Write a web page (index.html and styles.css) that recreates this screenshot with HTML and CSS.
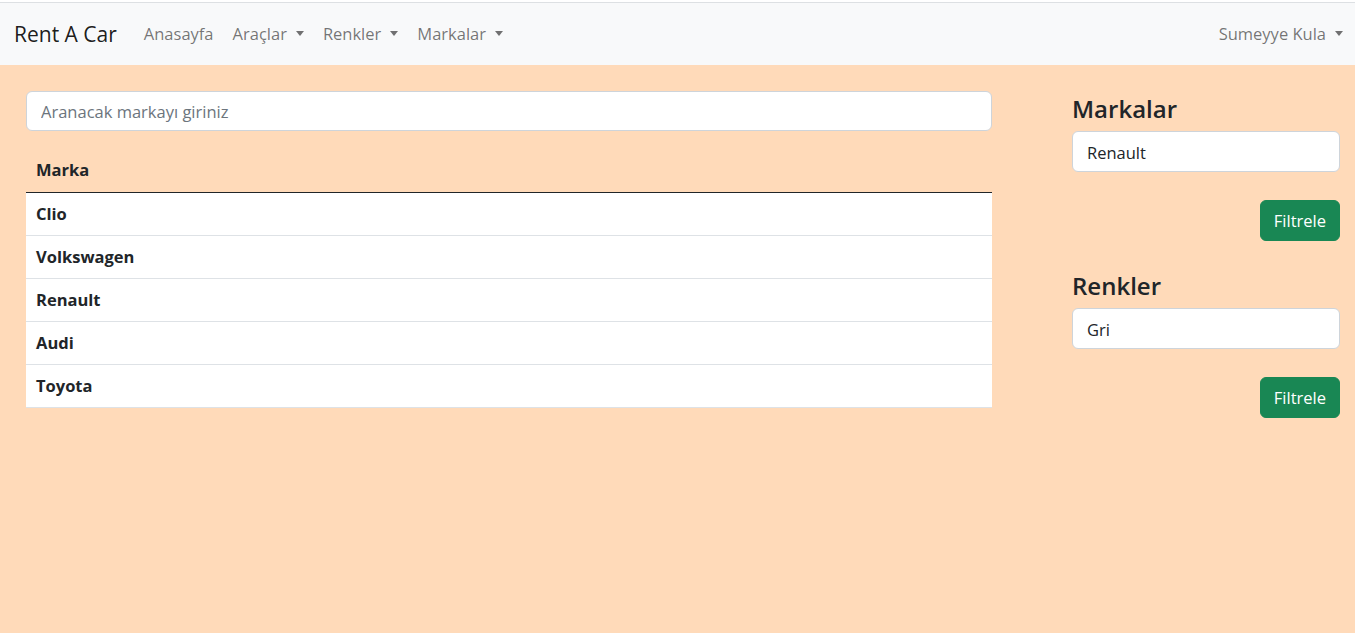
FILE: index.html
```html
<!DOCTYPE html>
<html lang="tr">
<head>
<meta charset="UTF-8">
<title>Rent A Car</title>
<link rel="stylesheet" href="styles.css">
</head>
<body>
<header class="site-header">
  <nav class="navbar">
    <a class="brand" href="#">Rent A Car</a>
    <ul class="nav-menu">
      <li><a class="nav-link" href="#">Anasayfa</a></li>
      <li><a class="nav-link dropdown" href="#">Araçlar</a></li>
      <li><a class="nav-link dropdown" href="#">Renkler</a></li>
      <li><a class="nav-link dropdown" href="#">Markalar</a></li>
    </ul>
    <a class="nav-link dropdown user" href="#">Sumeyye Kula</a>
  </nav>
</header>

<main class="page">
  <section class="brands">
    <input class="form-control" type="text" placeholder="Aranacak markayı giriniz">
    <table class="brand-table">
      <thead>
        <tr><th>Marka</th></tr>
      </thead>
      <tbody>
        <tr><th>Clio</th></tr>
        <tr><th>Volkswagen</th></tr>
        <tr><th>Renault</th></tr>
        <tr><th>Audi</th></tr>
        <tr><th>Toyota</th></tr>
      </tbody>
    </table>
  </section>

  <aside class="filters">
    <div class="filter-block">
      <h3>Markalar</h3>
      <input class="form-control" type="text" value="Renault">
      <div class="actions"><button class="btn-filter" type="button">Filtrele</button></div>
    </div>
    <div class="filter-block">
      <h3>Renkler</h3>
      <input class="form-control" type="text" value="Gri">
      <div class="actions"><button class="btn-filter" type="button">Filtrele</button></div>
    </div>
  </aside>
</main>
</body>
</html>
```

FILE: styles.css
```css
*{margin:0;padding:0;box-sizing:border-box;}
html,body{height:100%;}
body{background:#ffdab9; color:#212529; font-family:"Open Sans","Noto Sans",sans-serif; font-size:16.5px; line-height:24px;}
a{text-decoration:none;}

.site-header{background:#fff; padding-top:2px;}
.navbar{display:flex; align-items:center; height:63px; padding:0 12px 0 14px; background:#f8f9fa; border-top:1px solid #dde0e3;}
.brand{font-size:21px; color:rgba(0,0,0,.9); margin-right:18px; line-height:30px;}
.nav-menu{display:flex; list-style:none; flex:1;}
.nav-link{display:block; padding:8px 9px; color:rgba(0,0,0,.55);}
.dropdown::after{content:""; display:inline-block; margin-left:9px; vertical-align:4px; border-top:5px solid; border-left:4.5px solid transparent; border-right:4.5px solid transparent;}
.nav-menu li + li .nav-link{margin-left:1px;}
.nav-link.user{padding-right:0;}

.page{display:flex; justify-content:space-between; padding:26px 15px 0 26px;}
.brands{width:966px;}
.filters{width:268px; padding-top:3px;}

.form-control{display:block; width:100%; height:40px; padding:7px 14px; font:inherit; color:#212529; background:#fff; border:1px solid #ced4da; border-radius:6px; outline:none;}
.form-control::placeholder{color:#6c757d;}
.filters .form-control{height:41px; padding-top:8px;}

.brand-table{width:100%; margin-top:18px; border-collapse:collapse;}
.brand-table th{text-align:left; font-weight:700; height:43px; padding:0 10px; border-bottom:1px solid #dee2e6;}
.brand-table thead th{border-bottom-color:#212529;}
.brand-table tbody tr{background:#fff;}

.filter-block{margin-bottom:30px;}
.filter-block h3{font-size:24px; font-weight:600; line-height:29px; margin-bottom:8px;}
.actions{display:flex; justify-content:flex-end; margin-top:28px;}
.btn-filter{height:41px; padding:0 13px; font:inherit; color:#fff; background:#198754; border:1px solid #198754; border-radius:6px; cursor:pointer;}
```
